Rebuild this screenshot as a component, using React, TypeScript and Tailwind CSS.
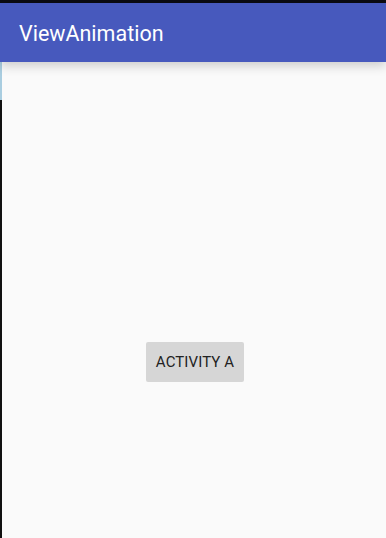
export default function App() {
  return (
    <div className="w-[386px] h-[538px] bg-black flex flex-col overflow-hidden" style={{ fontFamily: "Roboto, 'Liberation Sans', sans-serif" }}>
      <div className="h-[3px] bg-[#0b0b12]" />
      <header className="relative z-10 h-[59px] bg-[#4759bd] flex items-center pl-[19px] shadow-[0_4px_10px_rgba(0,0,0,0.18)]">
        <h1 className="text-white text-[21.5px] leading-none mt-[2px]">ViewAnimation</h1>
      </header>
      <div className="flex flex-1">
        <div className="w-[2px] flex flex-col">
          <div className="h-[38px] bg-[#a9cde0]" />
          <div className="flex-1 bg-[#111]" />
        </div>
        <main className="flex-1 bg-[#fafafa] flex flex-col items-center pt-[280px] pl-[2px]">
          <button className="w-[98px] h-[40px] bg-[#d6d6d6] rounded-[2px] text-[#222] text-[15px] tracking-[0.1px]">
            ACTIVITY A
          </button>
        </main>
      </div>
    </div>
  );
}
